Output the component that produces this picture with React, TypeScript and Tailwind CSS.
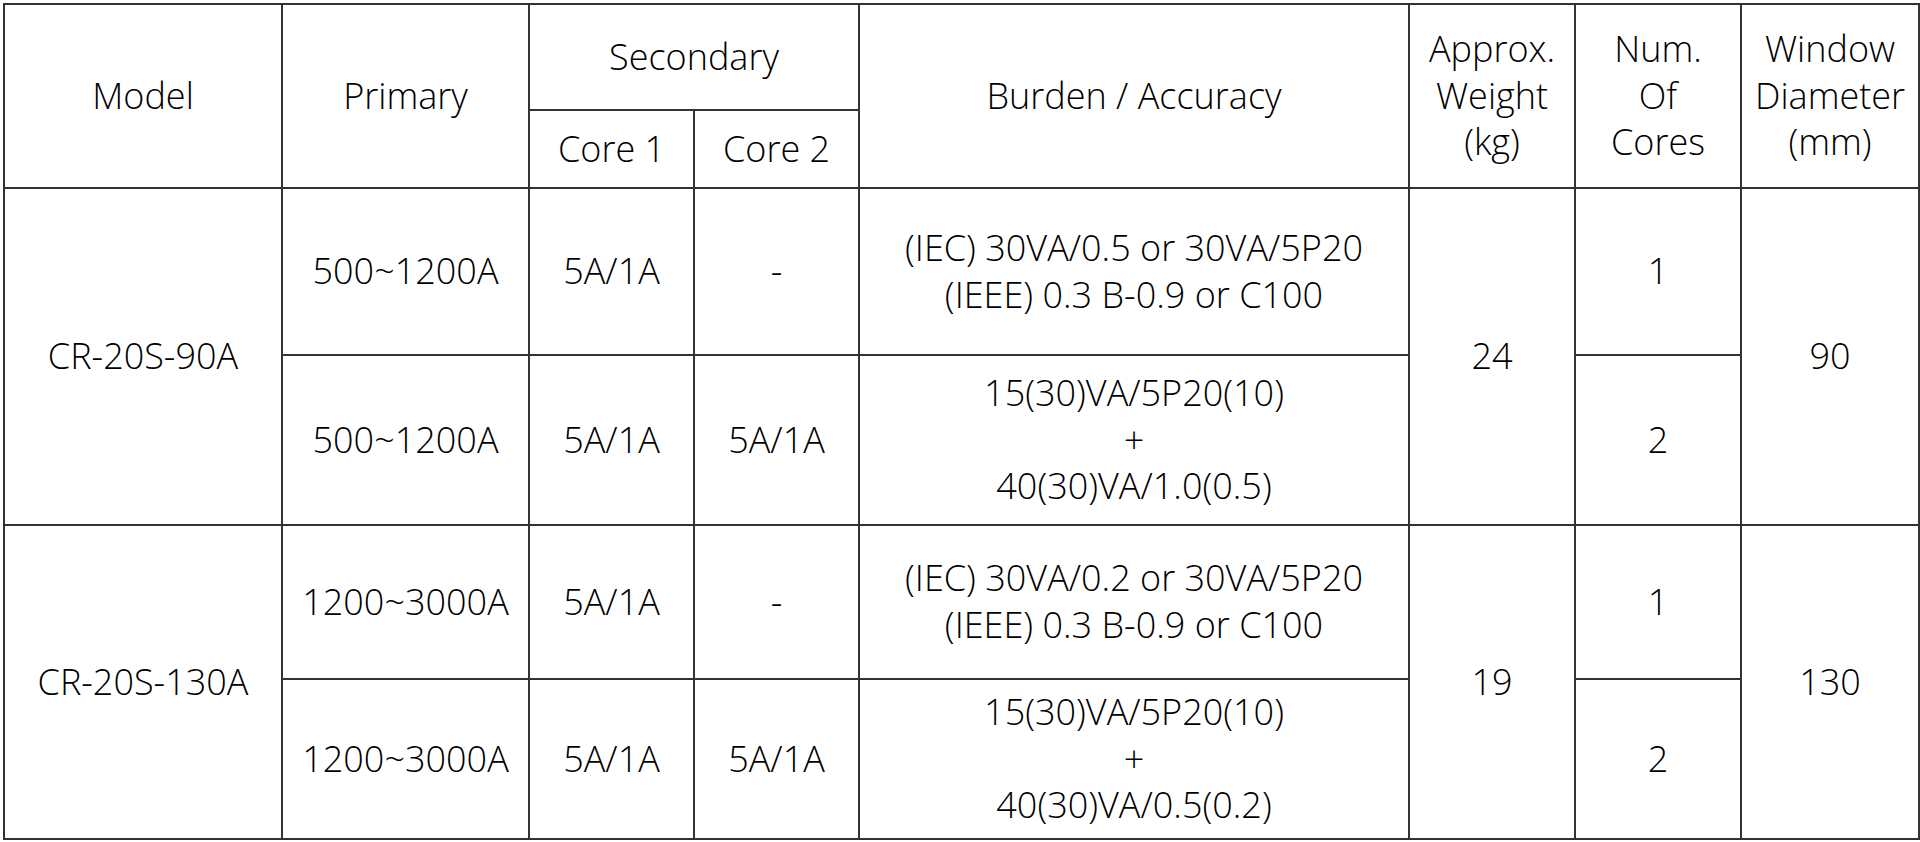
import React from "react";

const cell = "border-2 border-[#333333] text-center align-middle p-0";

export default function App() {
  return (
    <div className="w-[1920px] h-[842px] bg-white pt-[3px] pl-[3px]" style={{ fontFamily: '"Open Sans", "Noto Sans", sans-serif' }}>
      <table className="border-collapse table-fixed w-[1915px] text-[36px] leading-[1.3] font-[350] text-[#000000]">
        <colgroup>
          <col className="w-[278px]" />
          <col className="w-[247px]" />
          <col className="w-[165px]" />
          <col className="w-[165px]" />
          <col className="w-[550px]" />
          <col className="w-[166px]" />
          <col className="w-[166px]" />
          <col className="w-[178px]" />
        </colgroup>
        <tbody>
          <tr className="h-[106px]">
            <td className={cell} rowSpan={2}>Model</td>
            <td className={cell} rowSpan={2}>Primary</td>
            <td className={cell} colSpan={2}>Secondary</td>
            <td className={cell} rowSpan={2}>Burden / Accuracy</td>
            <td className={cell} rowSpan={2}>Approx.<br />Weight<br />(kg)</td>
            <td className={cell} rowSpan={2}>Num.<br />Of<br />Cores</td>
            <td className={cell} rowSpan={2}>Window<br />Diameter<br />(mm)</td>
          </tr>
          <tr className="h-[78px]">
            <td className={cell}>Core 1</td>
            <td className={cell}>Core 2</td>
          </tr>
          <tr className="h-[167px]">
            <td className={cell} rowSpan={2}>CR-20S-90A</td>
            <td className={cell}>500~1200A</td>
            <td className={cell}>5A/1A</td>
            <td className={cell}>-</td>
            <td className={cell}>(IEC) 30VA/0.5 or 30VA/5P20<br />(IEEE) 0.3 B-0.9 or C100</td>
            <td className={cell} rowSpan={2}>24</td>
            <td className={cell}>1</td>
            <td className={cell} rowSpan={2}>90</td>
          </tr>
          <tr className="h-[170px]">
            <td className={cell}>500~1200A</td>
            <td className={cell}>5A/1A</td>
            <td className={cell}>5A/1A</td>
            <td className={cell}>15(30)VA/5P20(10)<br />+<br />40(30)VA/1.0(0.5)</td>
            <td className={cell}>2</td>
          </tr>
          <tr className="h-[154px]">
            <td className={cell} rowSpan={2}>CR-20S-130A</td>
            <td className={cell}>1200~3000A</td>
            <td className={cell}>5A/1A</td>
            <td className={cell}>-</td>
            <td className={cell}>(IEC) 30VA/0.2 or 30VA/5P20<br />(IEEE) 0.3 B-0.9 or C100</td>
            <td className={cell} rowSpan={2}>19</td>
            <td className={cell}>1</td>
            <td className={cell} rowSpan={2}>130</td>
          </tr>
          <tr className="h-[160px]">
            <td className={cell}>1200~3000A</td>
            <td className={cell}>5A/1A</td>
            <td className={cell}>5A/1A</td>
            <td className={cell}>15(30)VA/5P20(10)<br />+<br />40(30)VA/0.5(0.2)</td>
            <td className={cell}>2</td>
          </tr>
        </tbody>
      </table>
    </div>
  );
}
